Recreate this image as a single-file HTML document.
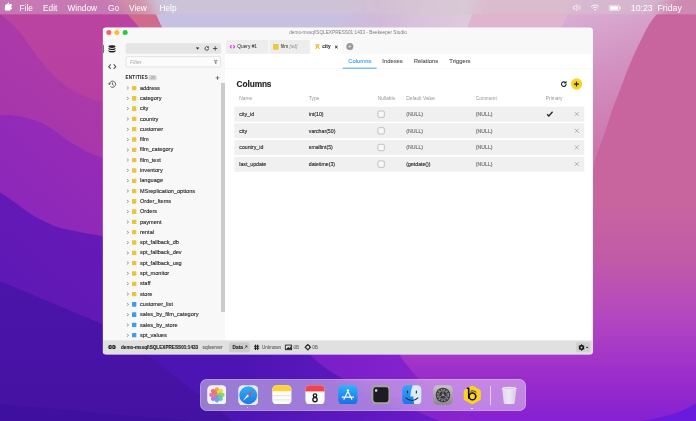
<!DOCTYPE html>
<html>
<head>
<meta charset="utf-8">
<title>Beekeeper Studio</title>
<style>
*{box-sizing:border-box;margin:0;padding:0}
html,body{width:696px;height:421px;overflow:hidden;background:#5a16b0}
body{position:relative;font-family:"Liberation Sans",sans-serif;color:#222}
.abs{position:absolute}
i{font-style:normal;display:block}
#wall{position:absolute;left:0;top:0;width:696px;height:421px}
#menubar{position:absolute;left:0;top:0;width:2088px;height:42.9px;background:rgba(212,200,206,0.400);color:#fff;font-size:24.9px;line-height:42px}
#menubar span{position:absolute;top:3.6px;white-space:nowrap}
#win{position:absolute;left:0px;top:1.5px;width:1468.8px;height:980.4px;border-radius:9px;background:#fff;overflow:hidden;box-shadow:0 0 0 1.5px rgba(235,225,245,0.550);-webkit-text-stroke:0.36px currentColor}
#titlebar{position:absolute;left:0;top:0;width:1470px;height:37.2px;background:#f8f8f8}
.tl{position:absolute;top:7.95px;width:15px;height:15px;border-radius:50%}
#title{position:absolute;left:1.5px;width:1467px;top:7.2px;text-align:center;font-size:14.16px;line-height:15px;color:#7c7c7c;-webkit-text-stroke:0}
#iconcol{position:absolute;left:0;top:36px;width:57.6px;height:904.5px;background:#f8f8f8}
#sidebar{position:absolute;left:57px;top:36px;width:311.1px;height:904.5px;background:#f8f8f8;overflow:hidden}
#main{position:absolute;left:366.9px;top:36px;width:1103.1px;height:904.5px;background:#fff}
#status{position:absolute;left:0;top:938.4px;width:1470px;height:42px;background:#e0e0e0;font-size:14.1px;line-height:42px;color:#4a4a4a}
#status span{position:absolute;top:0;white-space:nowrap}
.item{position:absolute;left:0;width:300px;height:30.9px;font-size:16.8px;line-height:30.9px;color:#262626;white-space:nowrap}
.item .chev{position:absolute;left:12.6px;top:9.6px;width:9px;height:12px}
.item .ico{position:absolute;left:30px;top:9px;width:13.2px;height:13.2px;border-radius:1.8px;background:#eac53c}
.item .ico.v{background:#3d9cf0}
.item .txt{position:absolute;left:54px;top:0.3px}
.row{position:absolute;left:27px;width:1050px;height:45px;background:#f0f0f0;border-radius:3.6px;font-size:15.6px;line-height:45px;color:#262626}
.row span{position:absolute;top:0.3px;white-space:nowrap}
.row .nul{color:#6c6c6c}
.cb{position:absolute;left:430.5px;top:12px;width:21px;height:21px;border:2.4px solid #a8a8a8;border-radius:4.2px;background:#f8f8f8}
.th{position:absolute;top:168.6px;font-size:14.55px;line-height:18px;color:#969696;-webkit-text-stroke:0;white-space:nowrap}
.sub{position:absolute;top:53.1px;font-size:17.55px;line-height:24px;color:#555;white-space:nowrap}
.tab{position:absolute;top:1.5px;height:40.5px;background:#ededed;border-radius:4.5px 4.5px 0 0;font-size:14.4px;line-height:40.5px;color:#3c3c3c;white-space:nowrap;-webkit-text-stroke:0.12px currentColor}
</style>
</head>
<body>
<svg id="wall" viewBox="0 0 696 421" preserveAspectRatio="none">
<defs>
<linearGradient id="gR" gradientUnits="userSpaceOnUse" x1="0" y1="0" x2="0" y2="421">
<stop offset="0" stop-color="#c8649e"/><stop offset="0.48" stop-color="#c8659f"/><stop offset="0.62" stop-color="#c05aa8"/><stop offset="0.75" stop-color="#b448c0"/><stop offset="0.9" stop-color="#9a2ccc"/><stop offset="1" stop-color="#8520d2"/>
</linearGradient>
<linearGradient id="gR1" gradientUnits="userSpaceOnUse" x1="588" y1="6" x2="634" y2="150">
<stop offset="0" stop-color="#d9aed4"/><stop offset="0.45" stop-color="#d290c0"/><stop offset="1" stop-color="#cb72aa"/>
</linearGradient>
<linearGradient id="gTop" gradientUnits="userSpaceOnUse" x1="150" y1="0" x2="592" y2="0">
<stop offset="0" stop-color="#c6c0e2"/><stop offset="0.41" stop-color="#c8c0e0"/><stop offset="0.52" stop-color="#d2b9d9"/><stop offset="0.61" stop-color="#d9c3dc"/><stop offset="0.72" stop-color="#dccadc"/><stop offset="1" stop-color="#dccadc"/>
</linearGradient>
<linearGradient id="gA" gradientUnits="userSpaceOnUse" x1="0" y1="0" x2="0" y2="110"><stop offset="0" stop-color="#bc44a0"/><stop offset="1" stop-color="#b63ea2"/></linearGradient>
<linearGradient id="gB" gradientUnits="userSpaceOnUse" x1="110" y1="20" x2="0" y2="160"><stop offset="0" stop-color="#b03ca4"/><stop offset="1" stop-color="#a434ae"/></linearGradient>
<linearGradient id="gC" gradientUnits="userSpaceOnUse" x1="110" y1="120" x2="0" y2="240"><stop offset="0" stop-color="#9a2cb4"/><stop offset="1" stop-color="#8826bc"/></linearGradient>
<linearGradient id="gD" gradientUnits="userSpaceOnUse" x1="110" y1="200" x2="0" y2="330"><stop offset="0" stop-color="#681ab8"/><stop offset="1" stop-color="#5c18b4"/></linearGradient>
<linearGradient id="gE" gradientUnits="userSpaceOnUse" x1="0" y1="281" x2="0" y2="421"><stop offset="0" stop-color="#4c14aa"/><stop offset="1" stop-color="#4412a2"/></linearGradient>
<linearGradient id="gBot" gradientUnits="userSpaceOnUse" x1="309" y1="0" x2="470" y2="0">
<stop offset="0" stop-color="#781ec8"/><stop offset="1" stop-color="#8a24cd"/>
</linearGradient>
<linearGradient id="gMid" gradientUnits="userSpaceOnUse" x1="233" y1="0" x2="440" y2="0">
<stop offset="0" stop-color="#4c14b2"/><stop offset="1" stop-color="#6a1ac8"/>
</linearGradient>
<filter id="bl" filterUnits="userSpaceOnUse" x="-30" y="-30" width="756" height="481"><feGaussianBlur stdDeviation="7"/></filter>
<clipPath id="cpM"><rect x="0" y="0" width="696" height="14.300"/></clipPath>
<clipPath id="cpD"><rect x="200.300" y="379" width="326" height="32" rx="7"/></clipPath>
</defs>
<g id="wp">
<rect x="-40" y="-40" width="776" height="501" fill="url(#gR)"/>
<!-- bottom strip -->
<path d="M100 340H392V372L445 421 505 461H100Z" fill="url(#gMid)"/>
<path d="M296 340L309 354C318 363 330 372 342 378S400 405 440 421L500 461H530L475 421C455 408 430 392 418 378S404 362 399 354L392 340Z" fill="url(#gBot)"/>
<!-- left regions -->
<path d="M-40 -40H360V340H-40Z" fill="url(#gA)"/>
<path d="M-40 -10L0 14C10 21 18 29 25 39S40 61 50 71.500 65 86 75 91.500 92 99 102 101.500 200 112 360 100V340H-40Z" fill="url(#gB)"/>
<path d="M-40 115H0C10 115 18 115.500 25 117.500S40 121 50 127.500 65 139 75 145 92 154 102 157.500 200 170 360 160V340H-40Z" fill="url(#gC)"/>
<path d="M-40 170L0 192.500C8 197 17 204 25 210S40 219 50 224 65 228.500 75 231 92 234 102 236 200 245 360 240V340H100V461H-40Z" fill="url(#gD)"/>
<path d="M-40 264L0 281 102 324 148 355 233 421 285 461H-40Z" fill="url(#gE)"/>
<path d="M-40 398L0 404 190 421 300 461H-40Z" fill="#3f10a0"/>
<!-- top strip -->
<path d="M81.500 -40L140.500 29 155 60H592V-40Z" fill="#cf6c8e"/>
<path d="M131 -40L163.200 30 175 60H592V-40Z" fill="url(#gTop)"/>
<path d="M493 -40L455 60H592V-40Z" fill="#e0b3cf"/>
<!-- right light region -->
<path d="M595 -40L545 60H592V185C592 178 594 165 595 160 602 140 606 130 609 120S614 105 618 95 625 76 630 64 639 44 644 34 652 20 657 14L690 -40Z" fill="url(#gR1)"/>
<!-- bottom right corner -->
<path d="M640 421C665 418 685 411 696 403L736 370V461H600Z" fill="#6a1adc"/>
</g>
<g clip-path="url(#cpM)"><use href="#wp" filter="url(#bl)"/></g>
<g clip-path="url(#cpD)"><use href="#wp" filter="url(#bl)"/></g>
</svg>

<div id="mw" style="position:absolute;left:0;top:0;width:0;height:0;transform:scale(0.333333);transform-origin:0 0">
<div id="menubar">
<svg class="abs" style="left:13.8px;top:7.2px;width:22.5px;height:27.6px" viewBox="0 0 170 200"><path fill="#fff" d="M150 153c-3 7-7 14-11 20-6 8-11 14-15 17-6 5-12 8-19 8-5 0-11-1-18-4s-13-4-19-4-12 1-19 4-13 5-17 5c-7 0-13-3-20-8-4-4-10-10-16-19-7-10-13-21-17-34C-1 124-3 111-3 98c0-15 3-28 10-39 5-9 12-16 20-21s18-8 27-8c5 0 12 2 21 5s14 5 17 5c2 0 9-2 20-6 11-4 20-5 27-5 20 2 35 9 45 23-18 11-27 26-26 45 0 15 6 28 16 38 5 5 10 8 16 11-1 4-3 7-4 11zM105-5c0 12-4 23-13 33-10 12-23 19-36 18 0-1 0-3 0-4 0-11 5-23 14-33 4-5 10-9 17-13 7-3 13-5 19-5 0 1 0 3 0 4z" transform="translate(8,10) scale(0.9)"/></svg>
<span style="left:58.5px">File</span><span style="left:129px">Edit</span><span style="left:202.5px">Window</span><span style="left:324px">Go</span><span style="left:387px">View</span><span style="left:478.5px">Help</span>
<!-- speaker -->
<svg class="abs" style="left:1717.5px;top:10.5px;width:27px;height:24px" viewBox="0 0 18 16"><path d="M1.500 5.500H4.500L8.500 2V14L4.500 10.500H1.500Z" fill="none" stroke="#fff" stroke-width="1.300" stroke-linejoin="round"/><path d="M11.500 5.500C12.500 7 12.500 9 11.500 10.500M14 3.500C16 6 16 10 14 12.500" fill="none" stroke="#fff" stroke-width="1.300" stroke-linecap="round" opacity="0.850"/></svg>
<!-- wifi -->
<svg class="abs" style="left:1771.5px;top:12px;width:27px;height:21px" viewBox="0 0 18 14"><path d="M1.500 5C5.500 1 12.500 1 16.500 5" fill="none" stroke="#fff" stroke-width="1.800" stroke-linecap="round"/><path d="M4.500 8C7 5.500 11 5.500 13.500 8" fill="none" stroke="#fff" stroke-width="1.800" stroke-linecap="round"/><circle cx="9" cy="11.500" r="1.700" fill="#fff"/></svg>
<!-- battery -->
<svg class="abs" style="left:1825.5px;top:13.5px;width:37.5px;height:19.5px" viewBox="0 0 25 13"><rect x="0.800" y="0.800" width="20.500" height="11.400" rx="3" fill="none" stroke="#fff" stroke-width="1.400"/><rect x="3" y="3" width="16" height="7" rx="1.500" fill="#fff"/><path d="M23 4.500V8.500" stroke="#fff" stroke-width="1.600" stroke-linecap="round"/></svg>
<span style="left:1892.4px;font-size:26.25px">10:23</span><span style="left:1972.5px;font-size:26.25px">Friday</span>
</div>

</div>
<div id="ww" style="position:absolute;left:103px;top:27px;width:0;height:0;transform:scale(0.333333);transform-origin:0 0">
<div id="win">
<div id="titlebar">
<i class="tl" style="left:9.6px;background:#fe5f57"></i>
<i class="tl" style="left:34.2px;background:#febc2e"></i>
<i class="tl" style="left:58.5px;background:#28c840"></i>
<div id="title">demo-mssql\SQLEXPRESS01:1433 - Beekeeper Studio</div>
</div>
<div id="iconcol">
<i class="abs" style="left:0.9px;top:16.5px;width:2.4px;height:24px;background:#333"></i>
<!-- db icon -->
<svg class="abs" style="left:15px;top:16.5px;width:24px;height:24px" viewBox="0 0 16 16"><ellipse cx="8" cy="3.200" rx="7" ry="2.700" fill="#222"/><path d="M1 5.300C2 7 5 7.500 8 7.500S14 7 15 5.300V8C14 9.800 11 10.300 8 10.300S2 9.800 1 8Z" fill="#222"/><path d="M1 9.800C2 11.500 5 12 8 12S14 11.500 15 9.800V12.500C14 14.500 11 15.200 8 15.200S2 14.500 1 12.500Z" fill="#222"/></svg>
<!-- code icon -->
<svg class="abs" style="left:15px;top:72px;width:25.5px;height:18px" viewBox="0 0 17 12"><path d="M5.500 1.500L1.500 6 5.500 10.500M11.500 1.500L15.500 6 11.500 10.500" fill="none" stroke="#585858" stroke-width="2.300"/></svg>
<!-- history icon -->
<svg class="abs" style="left:13.5px;top:121.5px;width:27px;height:25.5px" viewBox="0 0 18 17"><path d="M3.500 8.500A6.200 6.200 0 1 1 5.500 13" fill="none" stroke="#555" stroke-width="1.800"/><path d="M0.500 6.500L3.500 9.500 6.500 6.500" fill="none" stroke="#555" stroke-width="1.700"/><path d="M9.700 5V9L12.500 10.700" fill="none" stroke="#555" stroke-width="1.700"/></svg>
</div>
<div id="sidebar">
<i class="abs" style="left:10.5px;top:11.7px;width:286.5px;height:30.6px;background:#e5e5e5;border-radius:4.5px"></i>
<svg class="abs" style="left:221.4px;top:23.7px;width:11.4px;height:6.9px" viewBox="0 0 8 5"><path d="M0 0H8L4 5Z" fill="#333"/></svg>
<svg class="abs" style="left:246px;top:18.9px;width:16.5px;height:16.5px" viewBox="0 0 12 12"><path d="M10 6A4 4 0 1 1 8.800 3.200" fill="none" stroke="#333" stroke-width="1.700"/><path d="M10.500 0.500V4.500H6.500Z" fill="#333"/></svg>
<svg class="abs" style="left:271.5px;top:19.5px;width:15px;height:15px" viewBox="0 0 10 10"><path d="M5 0.500V9.500M0.500 5H9.500" stroke="#333" stroke-width="1.600"/></svg>
<i class="abs" style="left:10.5px;top:50.7px;width:286.5px;height:33px;background:#fbfbfb;border:2.1px solid #dadada;border-radius:4.8px"></i>
<span class="abs" style="left:24px;top:57px;font-size:15.6px;line-height:19.5px;color:#a8a8a8;font-style:italic;-webkit-text-stroke:0">Filter</span>
<svg class="abs" style="left:274.5px;top:60.6px;width:12px;height:13.5px" viewBox="0 0 8 9"><path d="M0.700 0.700H7.300L4.800 4V8L3.200 7V4Z" fill="none" stroke="#666" stroke-width="1.400" stroke-linejoin="round"/></svg>
<span class="abs" style="left:10.5px;top:107.4px;font-size:13.5px;line-height:16.5px;font-weight:bold;letter-spacing:0.9px;color:#222;-webkit-text-stroke:0">ENTITIES</span>
<span class="abs" style="left:80.1px;top:106.8px;width:24px;height:16.2px;border-radius:4.8px;background:#d6d6d6;font-size:10.8px;line-height:16.2px;text-align:center;color:#8a8a8a;-webkit-text-stroke:0">28</span>
<svg class="abs" style="left:279.9px;top:108px;width:13.2px;height:13.2px" viewBox="0 0 10 10"><path d="M5 0.300V9.700M0.300 5H9.700" stroke="#555" stroke-width="1.700"/></svg>
<div class="item" style="top:130.05px"><svg class="chev" viewBox="0 0 6 8"><path d="M1 1L4.500 4 1 7" fill="none" stroke="#555" stroke-width="1.100"/></svg><i class="ico"></i><span class="txt">address</span></div>
<div class="item" style="top:160.95px"><svg class="chev" viewBox="0 0 6 8"><path d="M1 1L4.500 4 1 7" fill="none" stroke="#555" stroke-width="1.100"/></svg><i class="ico"></i><span class="txt">category</span></div>
<div class="item" style="top:191.85px"><svg class="chev" viewBox="0 0 6 8"><path d="M1 1L4.500 4 1 7" fill="none" stroke="#555" stroke-width="1.100"/></svg><i class="ico"></i><span class="txt">city</span></div>
<div class="item" style="top:222.75px"><svg class="chev" viewBox="0 0 6 8"><path d="M1 1L4.500 4 1 7" fill="none" stroke="#555" stroke-width="1.100"/></svg><i class="ico"></i><span class="txt">country</span></div>
<div class="item" style="top:253.65px"><svg class="chev" viewBox="0 0 6 8"><path d="M1 1L4.500 4 1 7" fill="none" stroke="#555" stroke-width="1.100"/></svg><i class="ico"></i><span class="txt">customer</span></div>
<div class="item" style="top:284.55px"><svg class="chev" viewBox="0 0 6 8"><path d="M1 1L4.500 4 1 7" fill="none" stroke="#555" stroke-width="1.100"/></svg><i class="ico"></i><span class="txt">film</span></div>
<div class="item" style="top:315.45px"><svg class="chev" viewBox="0 0 6 8"><path d="M1 1L4.500 4 1 7" fill="none" stroke="#555" stroke-width="1.100"/></svg><i class="ico"></i><span class="txt">film_category</span></div>
<div class="item" style="top:346.35px"><svg class="chev" viewBox="0 0 6 8"><path d="M1 1L4.500 4 1 7" fill="none" stroke="#555" stroke-width="1.100"/></svg><i class="ico"></i><span class="txt">film_text</span></div>
<div class="item" style="top:377.25px"><svg class="chev" viewBox="0 0 6 8"><path d="M1 1L4.500 4 1 7" fill="none" stroke="#555" stroke-width="1.100"/></svg><i class="ico"></i><span class="txt">inventory</span></div>
<div class="item" style="top:408.15px"><svg class="chev" viewBox="0 0 6 8"><path d="M1 1L4.500 4 1 7" fill="none" stroke="#555" stroke-width="1.100"/></svg><i class="ico"></i><span class="txt">language</span></div>
<div class="item" style="top:439.05px"><svg class="chev" viewBox="0 0 6 8"><path d="M1 1L4.500 4 1 7" fill="none" stroke="#555" stroke-width="1.100"/></svg><i class="ico"></i><span class="txt">MSreplication_options</span></div>
<div class="item" style="top:469.95px"><svg class="chev" viewBox="0 0 6 8"><path d="M1 1L4.500 4 1 7" fill="none" stroke="#555" stroke-width="1.100"/></svg><i class="ico"></i><span class="txt">Order_Items</span></div>
<div class="item" style="top:500.85px"><svg class="chev" viewBox="0 0 6 8"><path d="M1 1L4.500 4 1 7" fill="none" stroke="#555" stroke-width="1.100"/></svg><i class="ico"></i><span class="txt">Orders</span></div>
<div class="item" style="top:531.75px"><svg class="chev" viewBox="0 0 6 8"><path d="M1 1L4.500 4 1 7" fill="none" stroke="#555" stroke-width="1.100"/></svg><i class="ico"></i><span class="txt">payment</span></div>
<div class="item" style="top:562.65px"><svg class="chev" viewBox="0 0 6 8"><path d="M1 1L4.500 4 1 7" fill="none" stroke="#555" stroke-width="1.100"/></svg><i class="ico"></i><span class="txt">rental</span></div>
<div class="item" style="top:593.55px"><svg class="chev" viewBox="0 0 6 8"><path d="M1 1L4.500 4 1 7" fill="none" stroke="#555" stroke-width="1.100"/></svg><i class="ico"></i><span class="txt">spt_fallback_db</span></div>
<div class="item" style="top:624.45px"><svg class="chev" viewBox="0 0 6 8"><path d="M1 1L4.500 4 1 7" fill="none" stroke="#555" stroke-width="1.100"/></svg><i class="ico"></i><span class="txt">spt_fallback_dev</span></div>
<div class="item" style="top:655.35px"><svg class="chev" viewBox="0 0 6 8"><path d="M1 1L4.500 4 1 7" fill="none" stroke="#555" stroke-width="1.100"/></svg><i class="ico"></i><span class="txt">spt_fallback_usg</span></div>
<div class="item" style="top:686.25px"><svg class="chev" viewBox="0 0 6 8"><path d="M1 1L4.500 4 1 7" fill="none" stroke="#555" stroke-width="1.100"/></svg><i class="ico"></i><span class="txt">spt_monitor</span></div>
<div class="item" style="top:717.15px"><svg class="chev" viewBox="0 0 6 8"><path d="M1 1L4.500 4 1 7" fill="none" stroke="#555" stroke-width="1.100"/></svg><i class="ico"></i><span class="txt">staff</span></div>
<div class="item" style="top:748.05px"><svg class="chev" viewBox="0 0 6 8"><path d="M1 1L4.500 4 1 7" fill="none" stroke="#555" stroke-width="1.100"/></svg><i class="ico"></i><span class="txt">store</span></div>
<div class="item" style="top:778.95px"><svg class="chev" viewBox="0 0 6 8"><path d="M1 1L4.500 4 1 7" fill="none" stroke="#555" stroke-width="1.100"/></svg><i class="ico v"></i><span class="txt">customer_list</span></div>
<div class="item" style="top:809.85px"><svg class="chev" viewBox="0 0 6 8"><path d="M1 1L4.500 4 1 7" fill="none" stroke="#555" stroke-width="1.100"/></svg><i class="ico v"></i><span class="txt">sales_by_film_category</span></div>
<div class="item" style="top:840.75px"><svg class="chev" viewBox="0 0 6 8"><path d="M1 1L4.500 4 1 7" fill="none" stroke="#555" stroke-width="1.100"/></svg><i class="ico v"></i><span class="txt">sales_by_store</span></div>
<div class="item" style="top:871.65px"><svg class="chev" viewBox="0 0 6 8"><path d="M1 1L4.500 4 1 7" fill="none" stroke="#555" stroke-width="1.100"/></svg><i class="ico v"></i><span class="txt">spt_values</span></div>
<i class="abs" style="left:297px;top:129px;width:12px;height:688.5px;background:#cbcbcb"></i>
</div>
<div id="main">
<!-- tab bar -->
<i class="abs" style="left:0;top:0;width:1104px;height:42px;background:#f8f8f8"></i>
<div class="tab" style="left:1.5px;width:127.5px"><svg class="abs" style="left:12px;top:14.1px;width:16.5px;height:12px" viewBox="0 0 11 8"><path d="M3.800 0.800L1 4 3.800 7.200M7.200 0.800L10 4 7.200 7.200" fill="none" stroke="#f030f0" stroke-width="2.300"/></svg><span class="abs" style="left:34.5px;top:0">Query #1</span></div>
<div class="tab" style="left:133.5px;width:120px"><i class="abs" style="left:9.9px;top:12px;width:17.1px;height:16.8px;border-radius:2.1px;background:#ecc83c"></i><span class="abs" style="left:33px;top:0">film <span style="color:#999;font-style:italic">[sd]</span></span></div>
<div class="tab" style="left:256.5px;width:93px;background:#fff"><svg class="abs" style="left:12px;top:12px;width:16.5px;height:16.5px" viewBox="0 0 11 11"><path d="M1 2H10M3 0.800L8 5.500M8 0.800L3 5.500M5.500 4.500L1.500 10M5.500 4.500L9.500 10" fill="none" stroke="#ecbc20" stroke-width="2.200"/></svg><span class="abs" style="left:34.5px;top:0;font-weight:bold;color:#222">city</span><svg class="abs" style="left:72px;top:15.9px;width:10.2px;height:10.2px" viewBox="0 0 8 8"><path d="M0.800 0.800L7.200 7.200M7.200 0.800L0.800 7.200" stroke="#1a1a1a" stroke-width="2.200"/></svg></div>
<i class="abs" style="left:363px;top:10.5px;width:21px;height:21px;border-radius:50%;background:#989898"></i>
<svg class="abs" style="left:368.1px;top:15.6px;width:10.8px;height:10.8px" viewBox="0 0 8 8"><path d="M4 0.500V7.500M0.500 4H7.500" stroke="#f3f3f3" stroke-width="1.300"/></svg>
<!-- sub tabs -->
<span class="sub" style="left:369px;color:#3ea0f0">Columns</span>
<span class="sub" style="left:471px">Indexes</span>
<span class="sub" style="left:565.5px">Relations</span>
<span class="sub" style="left:672px">Triggers</span>
<i class="abs" style="left:0;top:86.1px;width:1101px;height:1.8px;background:#ececec"></i>
<i class="abs" style="left:352.5px;top:84.6px;width:102px;height:3px;background:#42a5f5"></i>
<!-- heading -->
<span class="abs" style="left:33.9px;top:116.1px;font-size:24.9px;line-height:33px;font-weight:bold;color:#222;letter-spacing:-0.3px">Columns</span>
<svg class="abs" style="left:1004.7px;top:123.6px;width:20.7px;height:20.7px" viewBox="0 0 12 12"><path d="M10 6A4 4 0 1 1 8.800 3.200" fill="none" stroke="#222" stroke-width="1.900"/><path d="M10.800 0.300V4.800H6.300Z" fill="#222"/></svg>
<i class="abs" style="left:1037.1px;top:116.7px;width:33.6px;height:33.6px;border-radius:50%;background:#f9d527"></i>
<svg class="abs" style="left:1045.5px;top:125.1px;width:16.8px;height:16.8px" viewBox="0 0 10 10"><path d="M5 0.300V9.700M0.300 5H9.700" stroke="#2c2c2c" stroke-width="2.200"/></svg>
<!-- table header -->
<span class="th" style="left:42px">Name</span>
<span class="th" style="left:250.5px">Type</span>
<span class="th" style="left:457.5px">Nullable</span>
<span class="th" style="left:543px">Default Value</span>
<span class="th" style="left:751.5px">Comment</span>
<span class="th" style="left:961.5px">Primary</span>
<div class="row" style="top:201px"><span style="left:15px">city_id</span><span style="left:223.5px">int(10)</span><i class="cb"></i><span style="left:516px;color:#6c6c6c">(NULL)</span><span style="left:724.5px" class="nul">(NULL)</span><svg class="abs" style="left:936px;top:13.5px;width:21px;height:18px" viewBox="0 0 14 12"><path d="M1.500 6.500L5 10 12.500 1.500" fill="none" stroke="#222" stroke-width="2.400"/></svg><svg class="abs" style="left:1020.3px;top:15.3px;width:14.4px;height:14.4px" viewBox="0 0 8 8"><path d="M0.500 0.500L7.500 7.500M7.500 0.500L0.500 7.500" stroke="#8c8c8c" stroke-width="1"/></svg></div>
<div class="row" style="top:251.01px"><span style="left:15px">city</span><span style="left:223.5px">varchar(50)</span><i class="cb"></i><span style="left:516px;color:#6c6c6c">(NULL)</span><span style="left:724.5px" class="nul">(NULL)</span><svg class="abs" style="left:1020.3px;top:15.3px;width:14.4px;height:14.4px" viewBox="0 0 8 8"><path d="M0.500 0.500L7.500 7.500M7.500 0.500L0.500 7.500" stroke="#8c8c8c" stroke-width="1"/></svg></div>
<div class="row" style="top:301.02px"><span style="left:15px">country_id</span><span style="left:223.5px">smallint(5)</span><i class="cb"></i><span style="left:516px;color:#6c6c6c">(NULL)</span><span style="left:724.5px" class="nul">(NULL)</span><svg class="abs" style="left:1020.3px;top:15.3px;width:14.4px;height:14.4px" viewBox="0 0 8 8"><path d="M0.500 0.500L7.500 7.500M7.500 0.500L0.500 7.500" stroke="#8c8c8c" stroke-width="1"/></svg></div>
<div class="row" style="top:351.03px"><span style="left:15px">last_update</span><span style="left:223.5px">datetime(3)</span><i class="cb"></i><span style="left:516px;color:#262626">(getdate())</span><span style="left:724.5px" class="nul">(NULL)</span><svg class="abs" style="left:1020.3px;top:15.3px;width:14.4px;height:14.4px" viewBox="0 0 8 8"><path d="M0.500 0.500L7.500 7.500M7.500 0.500L0.500 7.500" stroke="#8c8c8c" stroke-width="1"/></svg></div>
</div>
<div id="status">
<svg class="abs" style="left:15px;top:14.4px;width:24px;height:13.2px" viewBox="0 0 14 8"><path d="M6 1.300H4A2.700 2.700 0 0 0 4 6.700H6M8 1.300H10A2.700 2.700 0 0 1 10 6.700H8M4.300 4H9.700" fill="none" stroke="#1c1c1c" stroke-width="2.400"/></svg>
<span style="left:54px;font-weight:bold;color:#1c1c1c;font-size:13.95px">demo-mssql\SQLEXPRESS01:1433</span>
<span style="left:298.5px;color:#666;font-size:15px">sqlserver</span>
<i class="abs" style="left:378px;top:5.7px;width:63px;height:30.9px;border-radius:6.6px;background:#cdcdcd"></i>
<span style="left:388.5px;font-weight:bold;color:#262626;font-size:14.4px">Data</span>
<svg class="abs" style="left:423px;top:15.6px;width:10.8px;height:10.8px" viewBox="0 0 8 8"><path d="M1 7L7 1M2.500 1H7V5.500" fill="none" stroke="#333" stroke-width="1.500"/></svg>
<svg class="abs" style="left:452.4px;top:12.6px;width:17.4px;height:17.4px" viewBox="0 0 10 10"><path d="M3.200 0.300V9.700M6.800 0.300V9.700M0.300 3.200H9.700M0.300 6.800H9.700" stroke="#222" stroke-width="1.800"/></svg>
<span style="left:477px;color:#6a6a6a;font-size:13.8px">Unknown</span>
<svg class="abs" style="left:545.4px;top:11.7px;width:22.8px;height:18.6px" viewBox="0 0 14 11"><rect x="1" y="1" width="12" height="9" rx="0.800" fill="none" stroke="#222" stroke-width="2"/><path d="M2 9L7 4.500 9 7 12 2.500V9Z" fill="#222"/></svg>
<span style="left:571.5px;color:#707070">0B</span>
<svg class="abs" style="left:603.9px;top:10.5px;width:21px;height:21px" viewBox="0 0 12 12"><circle cx="6" cy="6" r="3.500" fill="none" stroke="#222" stroke-width="1.900"/><path d="M6 0V3M6 9V12M0 6H3M9 6H12" stroke="#222" stroke-width="1.800"/></svg>
<span style="left:627.6px;color:#707070">0B</span>
<!-- settings button -->
<i class="abs" style="left:1419px;top:6px;width:42.9px;height:30.6px;border-radius:6px;background:#d0d0d0"></i>
<svg class="abs" style="left:1425.9px;top:11.7px;width:19.2px;height:19.2px" viewBox="0 0 12 12"><path d="M6 0.300L10.900 3.150V8.850L6 11.700 1.100 8.850V3.150Z" fill="#1c1c1c"/><path d="M6 0V12M0.800 3L11.200 9M11.200 3L0.800 9" stroke="#1c1c1c" stroke-width="2"/><circle cx="6" cy="6" r="1.700" fill="#d0d0d0"/></svg>
<svg class="abs" style="left:1448.4px;top:18.9px;width:9px;height:5.4px" viewBox="0 0 8 5"><path d="M0 0H8L4 5Z" fill="#222"/></svg>
</div>
</div>

</div>
<!-- dock -->
<div id="dock" class="abs" style="left:200.300px;top:379px;width:326px;height:32px;border-radius:7px;background:rgba(255,255,255,0.440);box-shadow:inset 0 0 0 0.600px rgba(255,255,255,0.380)"></div>
<!-- photos -->
<svg class="abs" style="left:206.500px;top:384.500px;width:19.800px;height:19.800px" viewBox="0 0 40 40"><rect x="0.500" y="0.500" width="39" height="39" rx="9" fill="#f3f3f3"/>
<g transform="translate(20,20)" opacity="0.900">
<ellipse cx="0" cy="-8" rx="4.800" ry="7.500" fill="#f5a030"/>
<ellipse cx="0" cy="-8" rx="4.800" ry="7.500" fill="#e8d838" transform="rotate(45)"/>
<ellipse cx="0" cy="-8" rx="4.800" ry="7.500" fill="#8cd050" transform="rotate(90)"/>
<ellipse cx="0" cy="-8" rx="4.800" ry="7.500" fill="#50c8a8" transform="rotate(135)"/>
<ellipse cx="0" cy="-8" rx="4.800" ry="7.500" fill="#58a0e8" transform="rotate(180)"/>
<ellipse cx="0" cy="-8" rx="4.800" ry="7.500" fill="#9878d8" transform="rotate(225)"/>
<ellipse cx="0" cy="-8" rx="4.800" ry="7.500" fill="#d870b8" transform="rotate(270)"/>
<ellipse cx="0" cy="-8" rx="4.800" ry="7.500" fill="#f06868" transform="rotate(315)"/>
</g></svg>
<!-- safari -->
<svg class="abs" style="left:237.500px;top:384.500px;width:20.500px;height:20.500px" viewBox="0 0 40 40"><defs><linearGradient id="sf" x1="0" y1="0" x2="0" y2="1"><stop offset="0" stop-color="#30b0f8"/><stop offset="1" stop-color="#1c78e8"/></linearGradient></defs><rect x="0.500" y="0.500" width="39" height="39" rx="9" fill="#e9ebf3"/><circle cx="20" cy="20" r="17.500" fill="url(#sf)"/><path d="M31 9L21.500 21.500 18.500 18.500Z" fill="#f04838"/><path d="M9 31L18.500 18.500 21.500 21.500Z" fill="#f6f6f6"/></svg>
<i class="abs" style="left:246.800px;top:407.300px;width:1.200px;height:1.200px;border-radius:50%;background:#f0f0f0"></i>
<!-- notes -->
<svg class="abs" style="left:272px;top:384.500px;width:19.800px;height:19.800px" viewBox="0 0 40 40"><defs><clipPath id="nc"><rect x="0.500" y="0.500" width="39" height="39" rx="9"/></clipPath></defs><g clip-path="url(#nc)"><rect width="40" height="40" fill="#fbfbf8"/><rect width="40" height="12.500" fill="#fcd234"/><path d="M0 21.500H40M0 30H40" stroke="#d6d6d6" stroke-width="1.300"/></g></svg>
<!-- calendar -->
<svg class="abs" style="left:305px;top:384.500px;width:20px;height:19.800px" viewBox="0 0 40 40"><defs><clipPath id="cc"><rect x="0.500" y="0.500" width="39" height="39" rx="9"/></clipPath></defs><g clip-path="url(#cc)"><rect width="40" height="40" fill="#fbfbfb"/><rect width="40" height="13" fill="#f0434e"/></g><circle cx="20" cy="21.300" r="3.500" fill="none" stroke="#1a1a1a" stroke-width="2.700"/><circle cx="20" cy="29.600" r="4.300" fill="none" stroke="#1a1a1a" stroke-width="2.700"/></svg>
<!-- app store -->
<svg class="abs" style="left:338px;top:384.500px;width:19.800px;height:19.800px" viewBox="0 0 40 40"><defs><linearGradient id="as" x1="0" y1="0" x2="0" y2="1"><stop offset="0" stop-color="#2cb4fa"/><stop offset="1" stop-color="#1a6ce8"/></linearGradient></defs><rect x="0.500" y="0.500" width="39" height="39" rx="9" fill="url(#as)"/><path d="M21.500 10L12 29M18.500 10L28 29M8.500 24.500H31.500" fill="none" stroke="#fff" stroke-width="2.300" stroke-linecap="round"/></svg>
<!-- terminal -->
<svg class="abs" style="left:370.500px;top:384.500px;width:19.800px;height:19.500px" viewBox="0 0 40 40"><rect x="0.500" y="0.500" width="39" height="39" rx="8.500" fill="#a4a4a4"/><rect x="4.500" y="4.500" width="31" height="31" rx="5" fill="#1d1d21"/><rect x="8" y="9" width="4.500" height="4.500" fill="#f0f0f0"/></svg>
<!-- finder -->
<svg class="abs" style="left:402px;top:384.500px;width:19.800px;height:19.800px" viewBox="0 0 40 40"><defs><clipPath id="fc"><rect x="0.500" y="0.500" width="39" height="39" rx="9"/></clipPath><linearGradient id="fb" x1="0" y1="0" x2="0" y2="1"><stop offset="0" stop-color="#34a8f8"/><stop offset="1" stop-color="#1a74ec"/></linearGradient></defs><g clip-path="url(#fc)"><rect width="40" height="40" fill="url(#fb)"/><path d="M22 0C18 10 17 18 17 23H23C23 30 24 36 25 40H40V0Z" fill="#dfeaf6"/><path d="M11 12V16M29 12V16" stroke="#1a2a48" stroke-width="2.200" stroke-linecap="round"/><path d="M8 26C15 33 26 33 32 26" fill="none" stroke="#1a2a48" stroke-width="2.200" stroke-linecap="round"/></g></svg>
<!-- sys prefs -->
<svg class="abs" style="left:433.300px;top:384.500px;width:20px;height:20px" viewBox="0 0 40 40"><defs><linearGradient id="sp" x1="0" y1="0" x2="0" y2="1"><stop offset="0" stop-color="#c6c6c8"/><stop offset="1" stop-color="#88888c"/></linearGradient></defs><rect x="0.500" y="0.500" width="39" height="39" rx="9" fill="url(#sp)"/><circle cx="20" cy="20" r="14.500" fill="#38383c"/><circle cx="20" cy="20" r="11" fill="none" stroke="#8c8c90" stroke-width="3" stroke-dasharray="3.400 2.350"/><circle cx="20" cy="20" r="8.500" fill="none" stroke="#8c8c90" stroke-width="1.800"/><path d="M20 20V12M20 20L27 24M20 20L13 24" stroke="#8c8c90" stroke-width="1.500"/><circle cx="20" cy="20" r="2" fill="#a0a0a4"/></svg>
<!-- beekeeper -->
<svg class="abs" style="left:462.600px;top:384.500px;width:18.600px;height:20px" viewBox="0 0 40 43"><path d="M17.500 2.200Q20 0.800 22.500 2.200L36 10Q38.500 11.500 38.500 14.300V28.700Q38.500 31.500 36 33L22.500 40.800Q20 42.200 17.500 40.800L4 33Q1.500 31.500 1.500 28.700V14.300Q1.500 11.500 4 10Z" fill="#fad221"/><path d="M9.500 7H12.300V28" fill="none" stroke="#111" stroke-width="3.400" stroke-linecap="round" stroke-linejoin="round"/><circle cx="20.300" cy="24.500" r="7.200" fill="none" stroke="#111" stroke-width="3.400"/><path d="M17 13C20.500 11.500 25 12.500 28 15.500" fill="none" stroke="#111" stroke-width="1.700" stroke-linecap="round"/></svg>
<i class="abs" style="left:471.400px;top:407.600px;width:1.200px;height:1.200px;border-radius:50%;background:#f0f0f0"></i>
<!-- separator -->
<i class="abs" style="left:490px;top:385.500px;width:0.700px;height:19px;background:rgba(255,255,255,0.600)"></i>
<!-- trash -->
<svg class="abs" style="left:500.500px;top:385.800px;width:16.500px;height:18.500px" viewBox="0 0 33 37"><defs><linearGradient id="tr" x1="0" y1="0" x2="1" y2="0"><stop offset="0" stop-color="#e4e0ee"/><stop offset="0.500" stop-color="#f4f2f8"/><stop offset="1" stop-color="#d8d2e6"/></linearGradient></defs><path d="M2 4H31L27.500 33Q27 36 24 36H9Q6 36 5.500 33Z" fill="url(#tr)" opacity="0.900"/><ellipse cx="16.500" cy="4.500" rx="14.500" ry="3" fill="#f6f4fa"/><ellipse cx="16.500" cy="4.800" rx="12" ry="1.800" fill="#d4cee2"/></svg>

</body>
</html>
